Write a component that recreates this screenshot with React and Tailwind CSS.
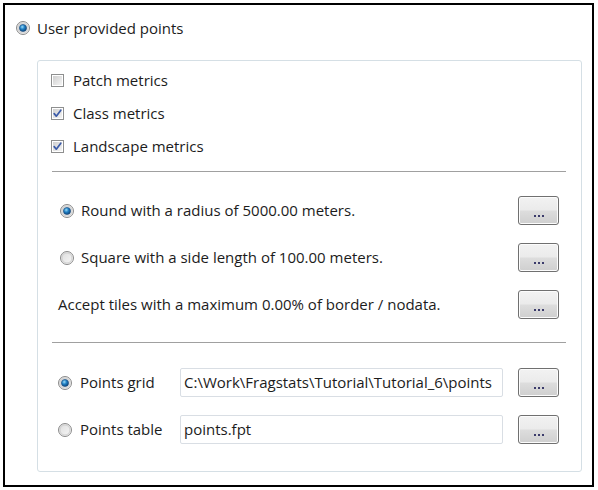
import React from 'react';

const Radio = ({ checked }) => (
  <svg width="14" height="14" viewBox="0 0 14 14" className="shrink-0">
    <defs>
      <linearGradient id="rfill" x1="0" y1="0" x2="1" y2="1">
        <stop offset="0" stopColor="#dcdcdc" />
        <stop offset="1" stopColor="#f8f8f8" />
      </linearGradient>
      <radialGradient id="rdot" cx="0.4" cy="0.35" r="0.7">
        <stop offset="0" stopColor="#9bdcf7" />
        <stop offset="0.45" stopColor="#1f7fc4" />
        <stop offset="1" stopColor="#0c3f73" />
      </radialGradient>
    </defs>
    <circle cx="7" cy="7" r="6.5" fill="url(#rfill)" stroke="#8a8a8a" strokeWidth="1" />
    <circle cx="7" cy="7" r="5" fill="none" stroke="#d0d0d0" strokeWidth="1" />
    {checked && <circle cx="7" cy="7" r="3.6" fill="url(#rdot)" stroke="#1d4a7a" strokeWidth="0.6" />}
  </svg>
);

const Checkbox = ({ checked }) => (
  <svg width="13" height="13" viewBox="0 0 13 13" className="shrink-0">
    <defs>
      <linearGradient id="cfill" x1="0" y1="0" x2="1" y2="1">
        <stop offset="0" stopColor="#cfcfcf" />
        <stop offset="1" stopColor="#f4f4f4" />
      </linearGradient>
    </defs>
    <rect x="0.5" y="0.5" width="12" height="12" fill="#ffffff" stroke="#8e8f8f" />
    <rect x="2" y="2" width="9" height="9" fill="url(#cfill)" />
    {checked && (
      <path d="M3.2 6.6 L5.3 9.2 L9.8 3.2" fill="none" stroke="#3a5aa8" strokeWidth="1.7" strokeLinecap="round" strokeLinejoin="round" />
    )}
  </svg>
);

const DotsButton = () => (
  <button className="w-[41px] h-[29px] shrink-0 rounded-[3px] border border-[#707070] bg-[linear-gradient(#f2f2f2_0%,#ebebeb_48%,#dddddd_52%,#cfcfcf_100%)] flex items-end justify-center pb-[7px] shadow-[inset_0_0_0_1px_#fcfcfc]">
    <span className="flex gap-[2px]">
      <span className="w-[2px] h-[2px] bg-[#3b3b6b]" />
      <span className="w-[2px] h-[2px] bg-[#3b3b6b]" />
      <span className="w-[2px] h-[2px] bg-[#3b3b6b]" />
    </span>
  </button>
);

const CheckRow = ({ checked, label }) => (
  <div className="h-[33px] flex items-center gap-[9px]">
    <Checkbox checked={checked} />
    <span>{label}</span>
  </div>
);

const ShapeRow = ({ checked, label }) => (
  <div className="flex items-center justify-between h-[29px]">
    <div className="flex items-center gap-[7px] pl-[9px]">
      <Radio checked={checked} />
      <span>{label}</span>
    </div>
    <DotsButton />
  </div>
);

const PointsRow = ({ checked, label, value }) => (
  <div className="flex items-center h-[29px]">
    <div className="flex items-center gap-[8px] pl-[7px] w-[129px]">
      <Radio checked={checked} />
      <span>{label}</span>
    </div>
    <div className="w-[323px] h-[29px] rounded-[2px] border border-[#d9dee4] bg-white flex items-center px-[3px]">
      {value}
    </div>
    <div className="ml-auto">
      <DotsButton />
    </div>
  </div>
);

export default function App() {
  return (
    <div className="w-[598px] h-[490px] bg-white font-['Open_Sans',sans-serif] text-[15px] text-[#1c1c1c] p-[3px]">
      <div className="w-[591px] h-[484px] border-2 border-black pt-[14px] pl-[11px]">
        <div className="flex items-center gap-[7px] h-[18px]">
          <Radio checked />
          <span>User provided points</span>
        </div>

        <div className="mt-[23px] ml-[21px] w-[545px] h-[412px] rounded-[3px] border border-[#d5dfe5] pt-[3px] pl-[13px] pr-[22px]">
          <CheckRow label="Patch metrics" />
          <CheckRow checked label="Class metrics" />
          <CheckRow checked label="Landscape metrics" />

          <div className="mt-[8px] ml-[1px] mr-[-7px] border-t border-[#a0a0a0]" />

          <div className="mt-[24px] flex flex-col gap-[18px]">
            <ShapeRow checked label="Round with a radius of 5000.00 meters." />
            <ShapeRow label="Square with a side length of 100.00 meters." />
            <div className="flex items-center justify-between h-[29px]">
              <span className="pl-[7px]">Accept tiles with a maximum 0.00% of border / nodata.</span>
              <DotsButton />
            </div>
          </div>

          <div className="mt-[23px] ml-[1px] mr-[-7px] border-t border-[#a0a0a0]" />

          <div className="mt-[25px] flex flex-col gap-[18px]">
            <PointsRow checked label="Points grid" value="C:\Work\Fragstats\Tutorial\Tutorial_6\points" />
            <PointsRow label="Points table" value="points.fpt" />
          </div>
        </div>
      </div>
    </div>
  );
}
